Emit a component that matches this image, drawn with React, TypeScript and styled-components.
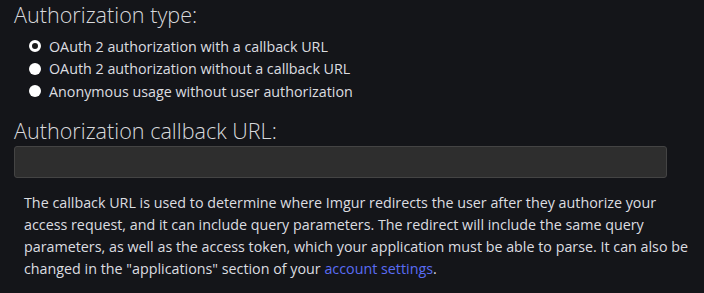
import React from "react";
import styled, { createGlobalStyle } from "styled-components";

const Global = createGlobalStyle`
  html, body { margin: 0; padding: 0; background: #141519; }
  body { font-family: "Open Sans", "Noto Sans", sans-serif; color: #dcdde0; }
`;

const Page = styled.div`
  padding: 0 4px 0 14px;
  width: 704px;
  box-sizing: border-box;
`;

const Heading = styled.h2<{ $top: number }>`
  margin: ${(p) => p.$top}px 0 0;
  font-size: 21.6px;
  font-weight: 300;
  line-height: 30px;
  color: #d8d9dc;
`;

const RadioList = styled.div`
  display: flex;
  flex-direction: column;
  margin: 5px 0 0 15px;
`;

const RadioRow = styled.label`
  display: flex;
  align-items: center;
  gap: 8px;
  height: 22.5px;
  font-size: 14.3px;
  color: #dcdde0;
`;

const Dot = styled.span<{ $checked: boolean }>`
  width: 12px;
  height: 12px;
  border-radius: 50%;
  box-sizing: border-box;
  background: ${(p) => (p.$checked ? "#1a1a1a" : "#ffffff")};
  border: ${(p) => (p.$checked ? "3.5px solid #ffffff" : "none")};
  flex: none;
`;

const Input = styled.div`
  width: 653px;
  height: 32px;
  box-sizing: border-box;
  background: #2e2e2e;
  border: 1px solid #444;
  border-radius: 3px;
`;

const Text = styled.p`
  margin: 14px 0 0 10px;
  font-size: 14.3px;
  line-height: 22px;
  color: #dcdde0;
`;

const Link = styled.a`
  color: #5a6cf3;
  text-decoration: none;
`;

const options = [
  { label: "OAuth 2 authorization with a callback URL", checked: true },
  { label: "OAuth 2 authorization without a callback URL", checked: false },
  { label: "Anonymous usage without user authorization", checked: false },
];

export default function App() {
  return (
    <>
      <Global />
      <Page>
        <Heading $top={0}>Authorization type:</Heading>
        <RadioList>
          {options.map((o) => (
            <RadioRow key={o.label}>
              <Dot $checked={o.checked} />
              {o.label}
            </RadioRow>
          ))}
        </RadioList>
        <Heading $top={13}>Authorization callback URL:</Heading>
        <Input />
        <Text>
          The callback URL is used to determine where Imgur redirects the user after they authorize your
          access request, and it can include query parameters. The redirect will include the same query
          parameters, as well as the access token, which your application must be able to parse. It can also be
          changed in the "applications" section of your <Link href="#">account settings</Link>.
        </Text>
      </Page>
    </>
  );
}
